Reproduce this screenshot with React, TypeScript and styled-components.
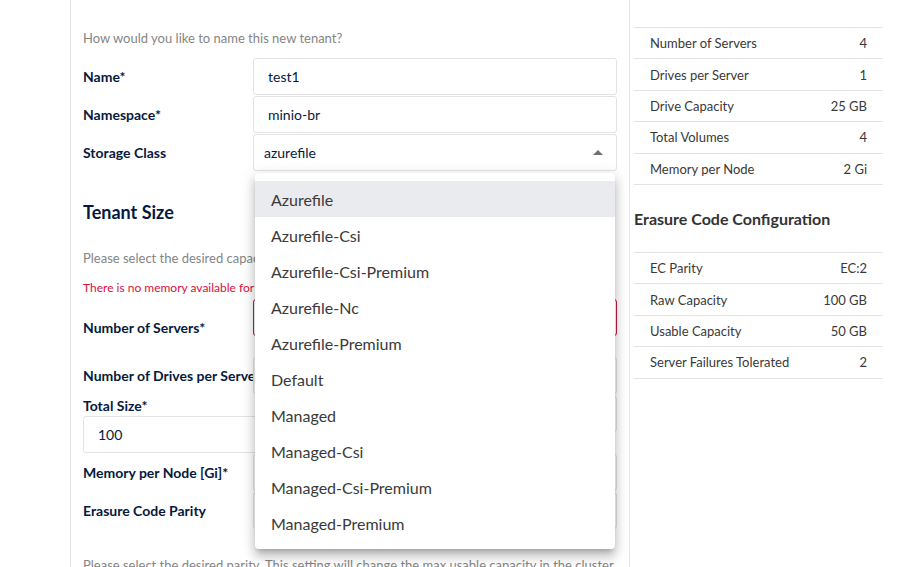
import React from "react";
import styled, { createGlobalStyle } from "styled-components";

const Global = createGlobalStyle`
  html, body { margin: 0; padding: 0; background: #fff; }
  body { font-family: Lato, "Open Sans", sans-serif; overflow: hidden; }
  * { box-sizing: border-box; }
`;

const Page = styled.div`
  display: flex;
  width: 911px;
  height: 567px;
  overflow: hidden;
  background: #fff;
`;

const Gutter = styled.div`
  width: 70px;
  flex: none;
`;

const Card = styled.div`
  width: 560px;
  flex: none;
  border-left: 1px solid #e5e5e5;
  border-right: 1px solid #e5e5e5;
  padding: 30px 12px 0 12px;
  display: flex;
  flex-direction: column;
  overflow: hidden;
  & > * {
    flex-shrink: 0;
  }
`;

const Helper = styled.div<{ $mt?: number }>`
  font-size: 13px;
  color: #858585;
  line-height: 17px;
  margin-top: ${(p) => p.$mt ?? 0}px;
  white-space: nowrap;
`;

const ErrorText = styled.div`
  font-size: 12px;
  color: #d8103e;
  line-height: 15px;
  margin-top: 13px;
  white-space: nowrap;
`;

const Row = styled.div<{ $mt?: number }>`
  display: flex;
  align-items: center;
  margin-top: ${(p) => p.$mt ?? 0}px;
  position: relative;
`;

const Label = styled.div`
  width: 170px;
  flex: none;
  font-size: 14px;
  font-weight: 700;
  color: #07193e;
  white-space: nowrap;
  overflow: hidden;
`;

const FieldCol = styled.div`
  flex: 1;
  display: flex;
  flex-direction: column;
  position: relative;
`;

const Input = styled.div<{ $error?: boolean; $pl?: number }>`
  height: 37px;
  flex-shrink: 0;
  border: 1px solid ${(p) => (p.$error ? "#c51b3f" : "#e3e3e3")};
  border-radius: 3px;
  display: flex;
  align-items: center;
  padding-left: ${(p) => p.$pl ?? 14}px;
  padding-right: 14px;
  font-size: 14px;
  color: #07193e;
  background: #fff;
`;

const SelectBox = styled(Input)`
  justify-content: space-between;
  padding-right: 13px;
`;

const Arrow = styled.span`
  width: 0;
  height: 0;
  border-left: 5px solid transparent;
  border-right: 5px solid transparent;
  border-bottom: 5px solid #707070;
`;

const Heading = styled.div`
  font-size: 18px;
  font-weight: 700;
  color: #07193e;
  margin-top: 30px;
  line-height: 22px;
`;

const Menu = styled.div`
  position: absolute;
  top: calc(100% + 2px);
  left: 2px;
  right: 2px;
  background: #fff;
  border-radius: 4px;
  padding: 8px 0;
  z-index: 10;
  box-shadow: 0px 5px 5px -3px rgba(0, 0, 0, 0.2),
    0px 8px 10px 1px rgba(0, 0, 0, 0.14), 0px 3px 14px 2px rgba(0, 0, 0, 0.12);
`;

const MenuItem = styled.div<{ $selected?: boolean }>`
  height: 36px;
  display: flex;
  align-items: center;
  padding-left: 16px;
  font-size: 16px;
  color: #3a3a3a;
  background: ${(p) => (p.$selected ? "#eaebee" : "transparent")};
`;

const Spacer = styled.div`
  height: 19px;
`;

const SizeRow = styled.div`
  display: flex;
  align-items: flex-start;
  margin-top: 2px;
`;

const StackLabel = styled(Label)`
  width: auto;
  line-height: 17px;
  margin-top: 1px;
  margin-bottom: 2px;
`;

const UnitBox = styled(Input)`
  width: 120px;
  flex: none;
  height: 36px;
`;

const Side = styled.div`
  width: 249px;
  margin-left: 4px;
  flex: none;
  padding-top: 27px;
`;

const Table = styled.div`
  border-top: 1px solid #e3e3e3;
`;

const TRow = styled.div`
  height: 31.4px;
  border-bottom: 1px solid #e3e3e3;
  display: flex;
  align-items: center;
  justify-content: space-between;
  padding: 0 16px;
  font-size: 13px;
  color: #393939;
`;

const SideHeading = styled.div`
  font-size: 16px;
  font-weight: 700;
  color: #333;
  margin: 24px 0 23px 0;
  line-height: 20px;
`;

const storageClasses = [
  "Azurefile",
  "Azurefile-Csi",
  "Azurefile-Csi-Premium",
  "Azurefile-Nc",
  "Azurefile-Premium",
  "Default",
  "Managed",
  "Managed-Csi",
  "Managed-Csi-Premium",
  "Managed-Premium",
];

const resources: [string, string][] = [
  ["Number of Servers", "4"],
  ["Drives per Server", "1"],
  ["Drive Capacity", "25 GB"],
  ["Total Volumes", "4"],
  ["Memory per Node", "2 Gi"],
];

const erasure: [string, string][] = [
  ["EC Parity", "EC:2"],
  ["Raw Capacity", "100 GB"],
  ["Usable Capacity", "50 GB"],
  ["Server Failures Tolerated", "2"],
];

export default function App() {
  return (
    <>
      <Global />
      <Page>
        <Gutter />
        <Card>
          <Helper>How would you like to name this new tenant?</Helper>
          <Row $mt={11}>
            <Label>Name*</Label>
            <FieldCol>
              <Input $pl={14}>test1</Input>
            </FieldCol>
          </Row>
          <Row $mt={1}>
            <Label>Namespace*</Label>
            <FieldCol>
              <Input $pl={14}>minio-br</Input>
            </FieldCol>
          </Row>
          <Row $mt={1}>
            <Label>Storage Class</Label>
            <FieldCol>
              <SelectBox $pl={10}>
                azurefile
                <Arrow />
              </SelectBox>
              <Menu>
                {storageClasses.map((s, i) => (
                  <MenuItem key={s} $selected={i === 0}>
                    {s}
                  </MenuItem>
                ))}
              </Menu>
            </FieldCol>
          </Row>

          <Heading>Tenant Size</Heading>
          <Helper $mt={27}>Please select the desired capacity</Helper>
          <ErrorText>
            There is no memory available for the selected number of nodes.
          </ErrorText>
          <Row $mt={4}>
            <Label>Number of Servers*</Label>
            <FieldCol>
              <Input $error>4</Input>
              <Spacer />
            </FieldCol>
          </Row>
          <Row $mt={2}>
            <Label>Number of Drives per Server*</Label>
            <FieldCol>
              <Input>1</Input>
            </FieldCol>
          </Row>
          <SizeRow>
            <FieldCol>
              <StackLabel>Total Size*</StackLabel>
              <Input>100</Input>
            </FieldCol>
            <UnitBox>Gi</UnitBox>
          </SizeRow>
          <Row $mt={1}>
            <Label>Memory per Node [Gi]*</Label>
            <FieldCol>
              <Input>2</Input>
            </FieldCol>
          </Row>
          <Row $mt={1}>
            <Label>Erasure Code Parity</Label>
            <FieldCol>
              <Input>EC:2</Input>
            </FieldCol>
          </Row>
          <Helper $mt={28}>
            Please select the desired parity. This setting will change the max
            usable capacity in the cluster
          </Helper>
        </Card>
        <Side>
          <Table>
            {resources.map(([k, v]) => (
              <TRow key={k}>
                <span>{k}</span>
                <span>{v}</span>
              </TRow>
            ))}
          </Table>
          <SideHeading>Erasure Code Configuration</SideHeading>
          <Table>
            {erasure.map(([k, v]) => (
              <TRow key={k}>
                <span>{k}</span>
                <span>{v}</span>
              </TRow>
            ))}
          </Table>
        </Side>
      </Page>
    </>
  );
}
